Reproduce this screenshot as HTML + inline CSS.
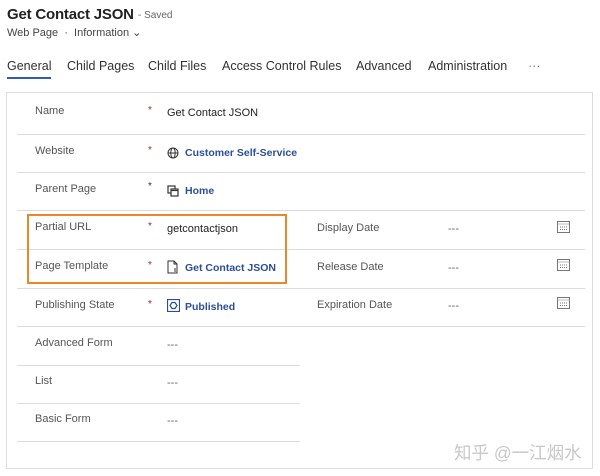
<!DOCTYPE html>
<html><head><meta charset="utf-8"><style>
*{margin:0;padding:0;box-sizing:border-box}
body{width:600px;height:476px;background:#fff;font-family:"Liberation Sans","Noto Sans CJK SC",sans-serif;color:#323130;position:relative;overflow:hidden}
.a{position:absolute;white-space:nowrap}
.lbl{font-size:11px;color:#555}
.val{font-size:11px;color:#222}
.lnk{font-size:10.5px;color:#2b4e9a;font-weight:bold}
.st{font-size:10px;color:#a4262c}
.hl{position:absolute;height:1px;background:#ddd}
.tab{font-size:12.5px;color:#323130;top:59px}
</style></head><body>
<div class="a" style="left:7px;top:6px;font-size:15px;font-weight:bold;color:#222;letter-spacing:-0.2px">Get Contact JSON</div>
<div class="a" style="left:138px;top:10px;font-size:10px;color:#666">- Saved</div>
<div class="a" style="left:7px;top:26px;font-size:11px;color:#444">Web Page &nbsp;·&nbsp; Information &#8964;</div>

<div class="a tab" style="left:7px">General</div>
<div class="a" style="left:7px;top:77px;width:44px;height:2px;background:#2f5fab"></div>
<div class="a tab" style="left:67px">Child Pages</div>
<div class="a tab" style="left:148px">Child Files</div>
<div class="a tab" style="left:222px">Access Control Rules</div>
<div class="a tab" style="left:356px">Advanced</div>
<div class="a tab" style="left:428px">Administration</div>
<div class="a tab" style="left:528px;color:#777">···</div>

<div class="a" style="left:6px;top:92px;width:587px;height:377px;border:1px solid #ddd"></div>

<div class="hl" style="left:17px;top:134px;width:568px"></div>
<div class="hl" style="left:17px;top:172px;width:568px"></div>
<div class="hl" style="left:17px;top:210px;width:568px"></div>
<div class="hl" style="left:17px;top:249px;width:568px"></div>
<div class="hl" style="left:17px;top:288px;width:568px"></div>
<div class="hl" style="left:17px;top:326px;width:568px"></div>
<div class="hl" style="left:17px;top:365px;width:283px"></div>
<div class="hl" style="left:17px;top:403px;width:283px"></div>
<div class="hl" style="left:17px;top:441px;width:283px"></div>

<div class="a lbl" style="left:35px;top:105px">Name</div>
<div class="a st" style="left:148px;top:105px">*</div>
<div class="a val" style="left:167px;top:107px">Get Contact JSON</div>

<div class="a lbl" style="left:35px;top:145px">Website</div>
<div class="a st" style="left:148px;top:145px">*</div>
<svg class="a" style="left:167px;top:147px" width="12" height="12" viewBox="0 0 12 12" fill="none" stroke="#333" stroke-width="1"><circle cx="6" cy="6" r="5"/><ellipse cx="6" cy="6" rx="2.2" ry="5"/><path d="M1 6h10"/></svg>
<div class="a lnk" style="left:185px;top:147px">Customer Self-Service</div>

<div class="a lbl" style="left:35px;top:183px">Parent Page</div>
<div class="a st" style="left:148px;top:181px;color:#333">*</div>
<svg class="a" style="left:167px;top:185px" width="12" height="12" viewBox="0 0 12 12" fill="none" stroke="#333" stroke-width="1.2"><rect x="1" y="1" width="7" height="7"/><rect x="4" y="4" width="7" height="7" fill="#fff"/><path d="M4 5.5h7"/></svg>
<div class="a lnk" style="left:185px;top:185px">Home</div>

<div class="a lbl" style="left:35px;top:221px">Partial URL</div>
<div class="a st" style="left:148px;top:221px">*</div>
<div class="a val" style="left:167px;top:223px">getcontactjson</div>

<div class="a lbl" style="left:35px;top:260px">Page Template</div>
<div class="a st" style="left:148px;top:260px">*</div>
<svg class="a" style="left:167px;top:260px" width="12" height="14" viewBox="0 0 12 14" fill="none" stroke="#333" stroke-width="1"><path d="M1 1h6l3 3v9H1z"/><path d="M7 1v3h3M8 8v4M10 9v3"/></svg>
<div class="a lnk" style="left:185px;top:262px">Get Contact JSON</div>

<div class="a" style="left:27px;top:214px;width:260px;height:70px;border:2px solid #e8872c"></div>

<div class="a lbl" style="left:35px;top:299px">Publishing State</div>
<div class="a st" style="left:148px;top:299px">*</div>
<svg class="a" style="left:167px;top:299px" width="13" height="13" viewBox="0 0 13 13" fill="none" stroke="#2b4e9a" stroke-width="1.2"><rect x="0.5" y="0.5" width="12" height="12"/><path d="M3 6.5l2-3h3l2 3-2 3H5z"/></svg>
<div class="a lnk" style="left:185px;top:301px">Published</div>

<div class="a lbl" style="left:317px;top:222px">Display Date</div>
<div class="a val" style="left:448px;top:223px;color:#666">---</div>
<div class="a lbl" style="left:317px;top:261px">Release Date</div>
<div class="a val" style="left:448px;top:262px;color:#666">---</div>
<div class="a lbl" style="left:317px;top:299px">Expiration Date</div>
<div class="a val" style="left:448px;top:300px;color:#666">---</div>
<svg class="a" style="left:557px;top:221px" width="13" height="12" viewBox="0 0 13 12" fill="none" stroke="#777" stroke-width="1"><rect x="0.5" y="0.5" width="12" height="11"/><path d="M0.5 3h12M3 6h7M3 8.5h7" stroke-dasharray="1 1"/></svg>
<svg class="a" style="left:557px;top:259px" width="13" height="12" viewBox="0 0 13 12" fill="none" stroke="#777" stroke-width="1"><rect x="0.5" y="0.5" width="12" height="11"/><path d="M0.5 3h12M3 6h7M3 8.5h7" stroke-dasharray="1 1"/></svg>
<svg class="a" style="left:557px;top:297px" width="13" height="12" viewBox="0 0 13 12" fill="none" stroke="#777" stroke-width="1"><rect x="0.5" y="0.5" width="12" height="11"/><path d="M0.5 3h12M3 6h7M3 8.5h7" stroke-dasharray="1 1"/></svg>

<div class="a lbl" style="left:35px;top:337px">Advanced Form</div>
<div class="a val" style="left:167px;top:339px;color:#666">---</div>
<div class="a lbl" style="left:35px;top:375px">List</div>
<div class="a val" style="left:167px;top:377px;color:#666">---</div>
<div class="a lbl" style="left:35px;top:413px">Basic Form</div>
<div class="a val" style="left:167px;top:415px;color:#666">---</div>

<div class="a" style="left:454px;top:440px;font-size:17.5px;color:#c8c8c8">知乎 @一江烟水</div>
</body></html>
